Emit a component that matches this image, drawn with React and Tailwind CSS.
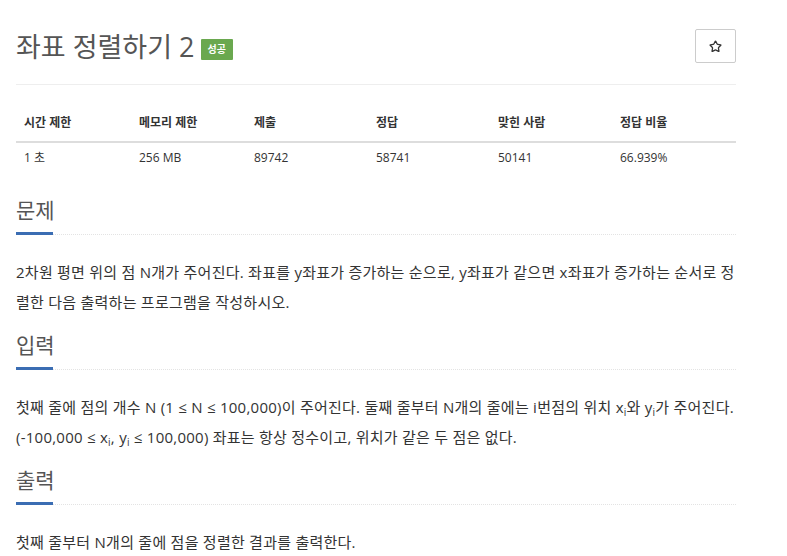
import React from 'react';
import { Star } from 'lucide-react';

const stats = [
  { label: '시간 제한', value: '1 초', w: 'w-[115px]' },
  { label: '메모리 제한', value: '256 MB', w: 'w-[115px]' },
  { label: '제출', value: '89742', w: 'w-[122px]' },
  { label: '정답', value: '58741', w: 'w-[122px]' },
  { label: '맞힌 사람', value: '50141', w: 'w-[122px]' },
  { label: '정답 비율', value: '66.939%', w: 'flex-1' },
];

const Section = ({ title, first, children }) => (
  <section className={first ? 'mt-[22px]' : 'mt-[13px]'}>
    <div className="flex flex-col">
      <h2 className="text-[21px] leading-[30px] text-[#555] pb-[7px]">{title}</h2>
      <div className="flex items-end">
        <div className="w-[37px] h-[3px] bg-[#3b6db3]" />
        <div className="flex-1 border-b border-dotted border-[#e3e3e3]" />
      </div>
    </div>
    <div className="pt-[22px] text-[15px] tracking-[0.25px] leading-[30px] text-[#333]">{children}</div>
  </section>
);

const Sub = ({ children }) => <sub className="text-[10px] leading-[0]">{children}</sub>;

export default function App() {
  return (
    <div
      className="w-[787px] h-[556px] overflow-hidden bg-white px-4"
      style={{ fontFamily: '"Open Sans", "Noto Sans CJK KR", sans-serif' }}
    >
      <div className="w-[720px]">
        {/* 제목 */}
        <div className="flex items-start justify-between pt-[30px] pb-[20px] border-b border-[#eee]">
          <div className="flex items-center gap-[6px]">
            <h1 className="text-[27px] leading-[34px] text-[#555]">좌표 정렬하기 2</h1>
            <span className="mt-[4px] bg-[#6aa84f] text-white text-[10px] font-bold leading-[21px] px-[7px] rounded-[1px]">성공</span>
          </div>
          <button className="w-[41px] h-[34px] mt-[-1px] border border-[#ccc] rounded-[2px] flex items-center justify-center text-[#333]">
            <Star className="w-[13px] h-[13px]" strokeWidth={2.4} />
          </button>
        </div>

        {/* 제한 표 */}
        <div className="mt-[20px] text-[12px] text-[#333]">
          <div className="flex border-b-2 border-[#ddd]">
            {stats.map((s) => (
              <div key={s.label} className={`${s.w} px-2 py-[10px] font-bold leading-[16px]`}>{s.label}</div>
            ))}
          </div>
          <div className="flex">
            {stats.map((s) => (
              <div key={s.label} className={`${s.w} px-2 py-[6px] leading-[18px]`}>{s.value}</div>
            ))}
          </div>
        </div>

        <Section title="문제" first>
          <p>2차원 평면 위의 점 N개가 주어진다. 좌표를 y좌표가 증가하는 순으로, y좌표가 같으면 x좌표가 증가하는 순서로 정렬한 다음 출력하는 프로그램을 작성하시오.</p>
        </Section>

        <Section title="입력">
          <p>
            첫째 줄에 점의 개수 N (1 ≤ N ≤ 100,000)이 주어진다. 둘째 줄부터 N개의 줄에는 i번점의 위치 x<Sub>i</Sub>와 y<Sub>i</Sub>가 주어진다. (-100,000 ≤ x<Sub>i</Sub>, y<Sub>i</Sub> ≤ 100,000) 좌표는 항상 정수이고, 위치가 같은 두 점은 없다.
          </p>
        </Section>

        <Section title="출력">
          <p>첫째 줄부터 N개의 줄에 점을 정렬한 결과를 출력한다.</p>
        </Section>
      </div>
    </div>
  );
}
